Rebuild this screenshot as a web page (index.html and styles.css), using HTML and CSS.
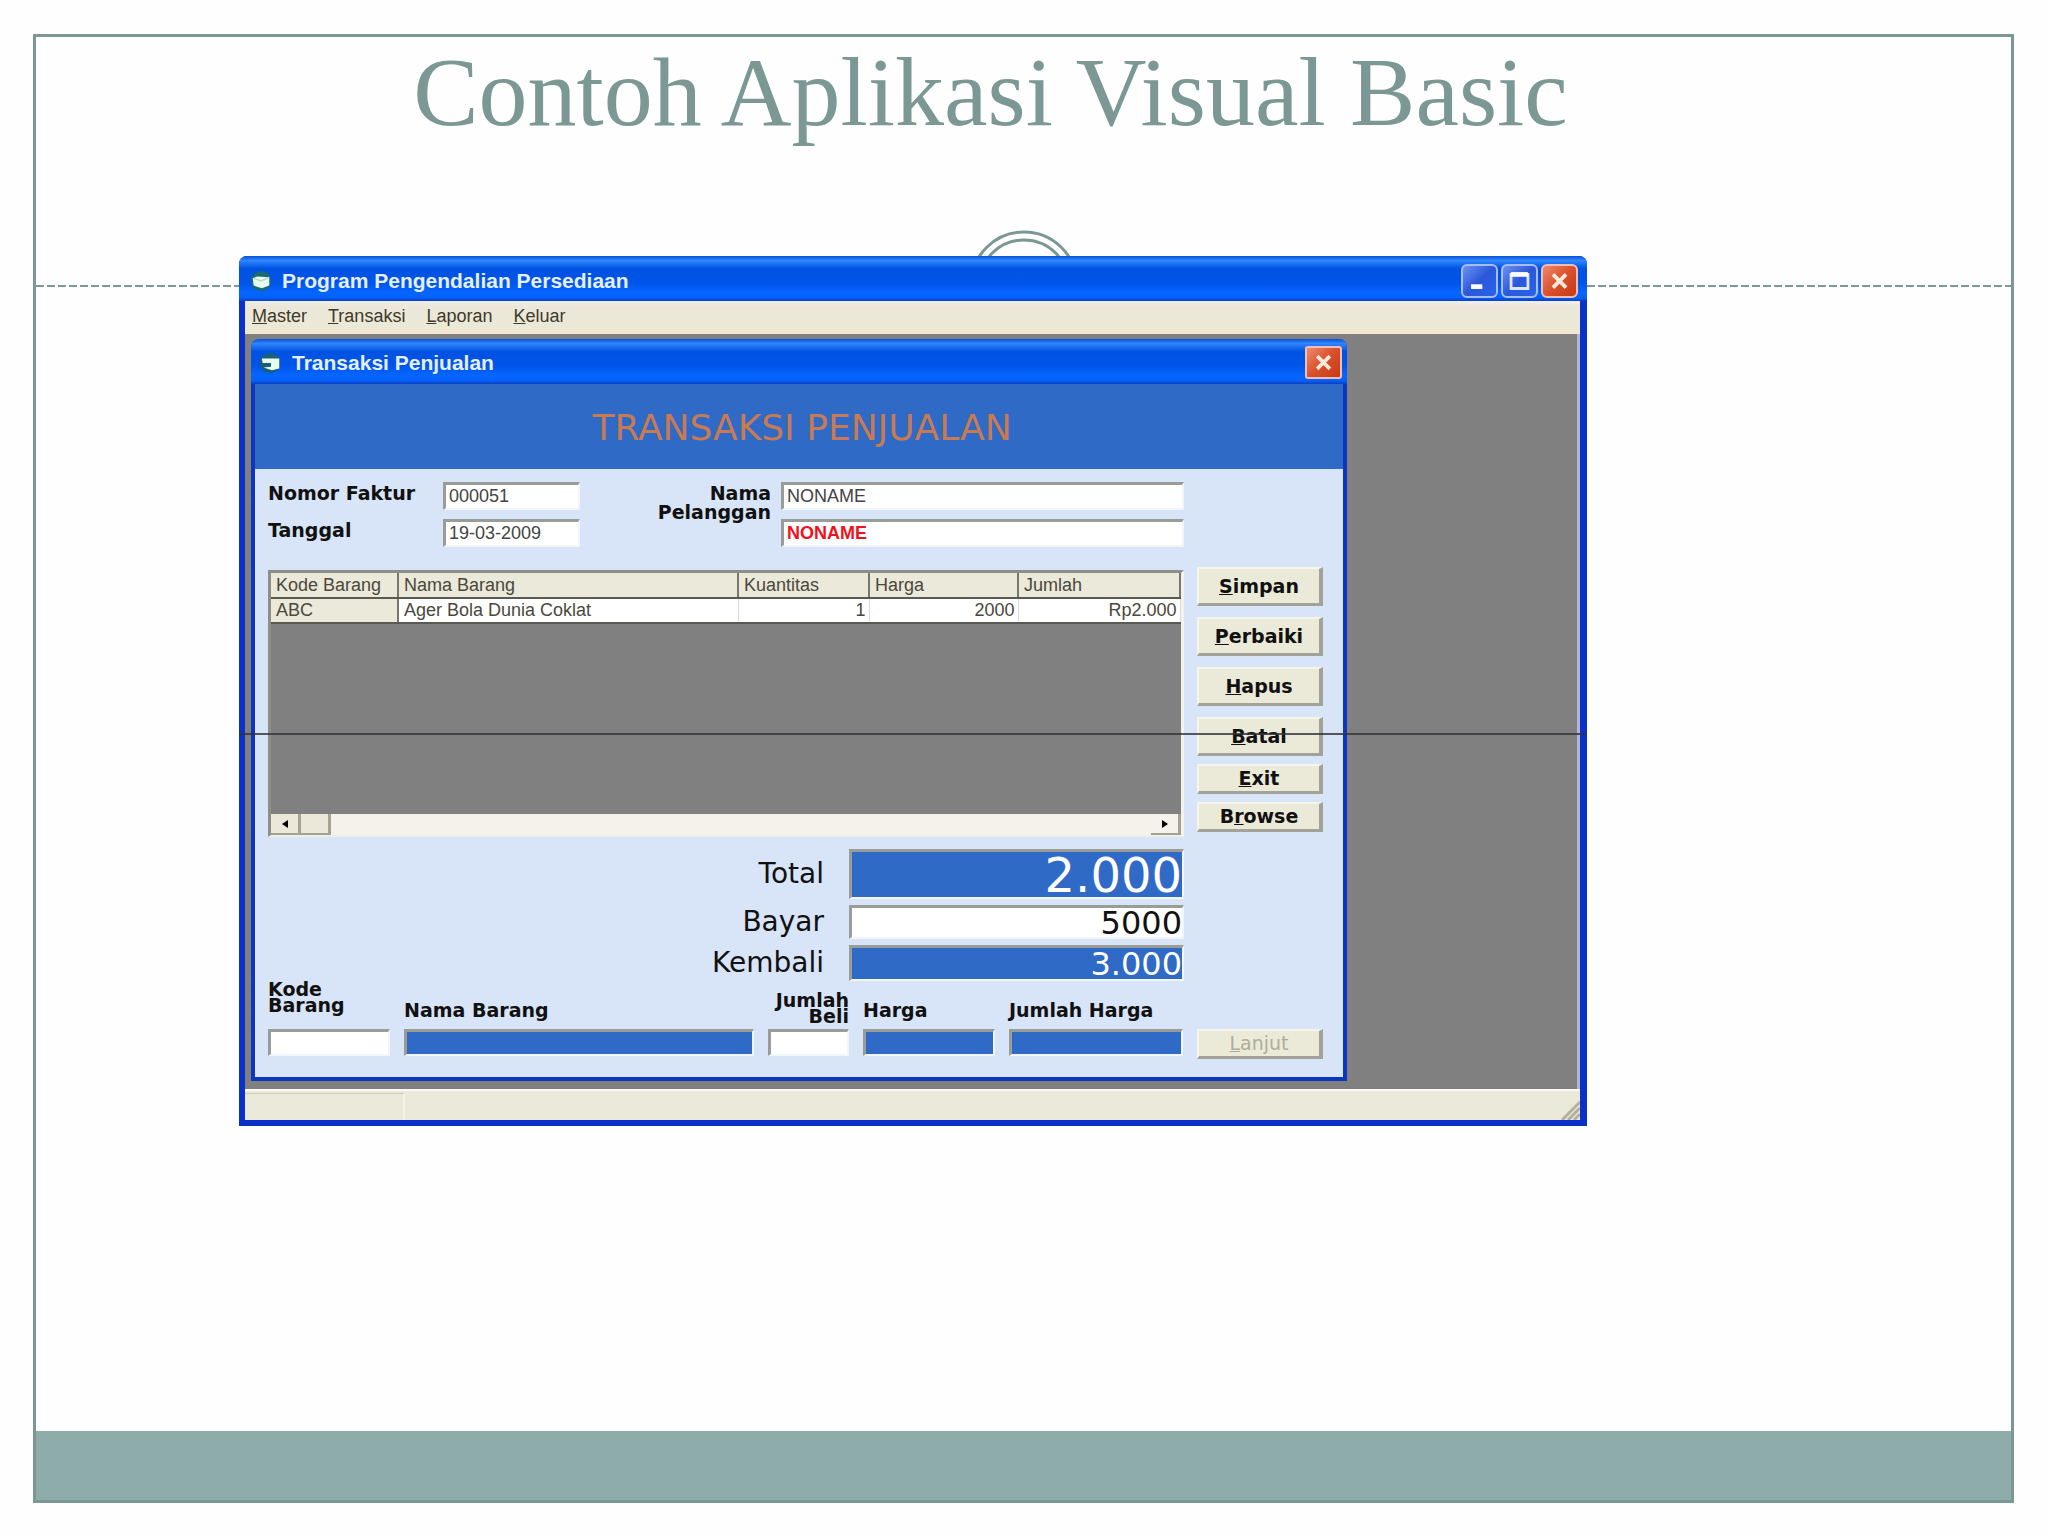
FILE: index.html
```html
<!DOCTYPE html>
<html lang="id">
<head>
<meta charset="utf-8">
<meta name="viewport" content="width=device-width, initial-scale=1">
<title>Contoh Aplikasi Visual Basic</title>
<link rel="stylesheet" href="styles.css">
</head>
<body>
<main class="slide">
  <header class="slide-header">
    <h1>Contoh Aplikasi Visual Basic</h1>
    <svg class="rings" viewBox="0 0 112 112" aria-hidden="true"><circle cx="56" cy="56" r="53"/><circle cx="56" cy="56" r="45"/></svg>
  </header>

  <section class="window" aria-label="Program Pengendalian Persediaan">
    <div class="titlebar">
      <svg class="app-icon" viewBox="0 0 24 24" aria-hidden="true"><circle cx="12" cy="12" r="11" fill="#1b6a74"/><path d="M3 9l5-2 13 1v9l-8 3-9-3z" fill="#e8fbf0"/><path d="M4 9l8 3 9-4" fill="none" stroke="#a9dcc8" stroke-width="1.5"/></svg>
      <span class="caption">Program Pengendalian Persediaan</span>
      <div class="controls">
        <button class="control" type="button" aria-label="Minimize"><svg viewBox="0 0 34 32"><path d="M8 22h12" stroke="#fff" stroke-width="5"/></svg></button>
        <button class="control" type="button" aria-label="Maximize"><svg viewBox="0 0 34 32"><path d="M8 9h18v15H8z" fill="none" stroke="#dbe6ff" stroke-width="3"/><path d="M8 9h18" stroke="#fff" stroke-width="5"/></svg></button>
        <button class="control close" type="button" aria-label="Close"><svg viewBox="0 0 34 32"><path d="M10 9l14 14M24 9L10 23" stroke="#ffe9d8" stroke-width="4"/></svg></button>
      </div>
    </div>
    <nav class="menubar">
      <a href="#"><u>M</u>aster</a><a href="#"><u>T</u>ransaksi</a><a href="#"><u>L</u>aporan</a><a href="#"><u>K</u>eluar</a>
    </nav>
    <div class="workspace">
      <section class="child" aria-label="Transaksi Penjualan">
        <div class="titlebar child-title">
          <svg class="app-icon" viewBox="0 0 24 24" aria-hidden="true"><circle cx="11" cy="12" r="11" fill="#1b5f74"/><path d="M2 7h19v11l-8 2-9-3 8-1v-4H3z" fill="#e8fbf0"/></svg>
          <span class="caption">Transaksi Penjualan</span>
          <button class="control close" type="button" aria-label="Close"><svg viewBox="0 0 34 32"><path d="M10 9l14 14M24 9L10 23" stroke="#ffe9d8" stroke-width="4"/></svg></button>
        </div>
        <h2 class="band">TRANSAKSI PENJUALAN</h2>
        <form class="form">
          <div class="customer">
            <label for="faktur">Nomor Faktur</label>
            <input id="faktur" type="text" value="000051">
            <label class="customer-label" for="pelanggan">Nama Pelanggan</label>
            <input id="pelanggan" type="text" value="NONAME">
            <label for="tanggal">Tanggal</label>
            <input id="tanggal" type="text" value="19-03-2009">
            <input class="alert" type="text" value="NONAME" aria-label="Nama Pelanggan terpilih">
          </div>
          <div class="sale">
            <div class="grid-view">
              <table>
                <colgroup><col class="c-code"><col class="c-name"><col class="c-qty"><col class="c-price"><col class="c-sum"></colgroup>
                <thead><tr><th>Kode Barang</th><th>Nama Barang</th><th>Kuantitas</th><th>Harga</th><th>Jumlah</th></tr></thead>
                <tbody><tr><th scope="row">ABC</th><td>Ager Bola Dunia Coklat</td><td class="num">1</td><td class="num">2000</td><td class="num">Rp2.000</td></tr></tbody>
              </table>
              <div class="scrollbar">
                <button type="button" aria-label="Gulir kiri"><svg viewBox="0 0 10 10"><path d="M8 1v8L2 5z"/></svg></button>
                <span class="thumb"></span>
                <button class="scroll-end" type="button" aria-label="Gulir kanan"><svg viewBox="0 0 10 10"><path d="M2 1v8l6-4z"/></svg></button>
              </div>
            </div>
            <div class="actions">
              <button type="button"><u>S</u>impan</button>
              <button type="button"><u>P</u>erbaiki</button>
              <button type="button"><u>H</u>apus</button>
              <button type="button"><u>B</u>atal</button>
              <button class="short" type="button"><u>E</u>xit</button>
              <button class="short" type="button">B<u>r</u>owse</button>
            </div>
          </div>
          <div class="totals">
            <label for="total">Total</label><input id="total" class="blue total" type="text" value="2.000" readonly>
            <label for="bayar">Bayar</label><input id="bayar" type="text" value="5000">
            <label for="kembali">Kembali</label><input id="kembali" class="blue" type="text" value="3.000" readonly>
          </div>
          <div class="entry">
            <label class="two-line top" for="kode">Kode Barang</label>
            <label for="nama">Nama Barang</label>
            <label class="two-line right" for="jumlah">Jumlah Beli</label>
            <label for="harga">Harga</label>
            <label for="subtotal">Jumlah Harga</label>
            <span></span>
            <input id="kode" type="text">
            <input id="nama" class="blue" type="text" readonly>
            <input id="jumlah" type="text">
            <input id="harga" class="blue" type="text" readonly>
            <input id="subtotal" class="blue" type="text" readonly>
            <button class="short" type="button" disabled><u>L</u>anjut</button>
          </div>
        </form>
      </section>
    </div>
    <div class="statusbar"><span class="panel"></span><svg class="grip" viewBox="0 0 20 20" aria-hidden="true"><path d="M2 20L20 2M8 20L20 8M14 20l6-6" stroke="#b3b09d" stroke-width="3"/></svg></div>
    <div class="seam"></div>
  </section>
  <footer class="slide-footer"></footer>
</main>
</body>
</html>
```
FILE: styles.css
```css
* { box-sizing: border-box; }

body {
  margin: 0;
  background: #fefefe;
  font-family: "Liberation Sans", Arial, sans-serif;
  font-size: 18px;
  color: #111;
}

button, input { font: inherit; color: inherit; margin: 0; }

.slide {
  display: flex;
  flex-direction: column;
  min-height: calc(100vh - 67px);
  margin: 34px 34px 33px 33px;
  border: 3px solid #7b9894;
}

.slide-header {
  position: relative;
  height: 250px;
  padding-right: 66px;
  background: repeating-linear-gradient(90deg, #7b9894 0 8px, transparent 8px 11px) bottom / 100% 2px no-repeat;
}

h1 {
  margin: 0;
  text-align: center;
  font: 400 98px/110px Georgia, "Liberation Serif", serif;
  color: #7b9894;
}

.rings {
  position: absolute;
  left: 50%;
  bottom: -54px;
  width: 112px;
  height: 112px;
  margin-left: -56px;
  fill: none;
  stroke: #7b9894;
  stroke-width: 3px;
}

.window {
  position: relative;
  width: 100%;
  max-width: 1348px;
  margin: -31px 0 40px 203px;
  border: solid #0a32c8;
  border-width: 0 7px 6px 6px;
  border-radius: 8px 8px 0 0;
  background: #0a32c8;
}

.titlebar {
  display: flex;
  align-items: center;
  gap: 10px;
  height: 45px;
  margin: 0 -7px 0 -6px;
  padding: 5px 9px 0 11px;
  border-radius: 8px 8px 0 0;
  background: linear-gradient(#0a50d8, #2f86ff 10%, #0052e0 28%, #0054ea 60%, #0566ff 80%, #0462fa 92%, #0a3fc4);
  color: #e4efff;
}

.app-icon { width: 22px; height: 22px; flex: none; }

.caption { flex: 1; font-size: 21px; font-weight: 700; }

.controls { display: flex; gap: 3px; }

.control {
  width: 37px;
  height: 34px;
  padding: 0;
  border: 2px solid #a9bdf5;
  border-radius: 6px;
  background: linear-gradient(135deg, #6d92f2, #2b58da 50%, #2a62ea);
}

.control svg { display: block; width: 100%; height: 100%; fill: none; }

.close { border-color: #eebfb8; background: linear-gradient(135deg, #ee8a6a, #d9502c 50%, #c73a12); }

.menubar {
  display: flex;
  gap: 21px;
  height: 33px;
  padding: 0 7px;
  line-height: 31px;
  background: linear-gradient(#eef0f0, #ece7da 15%, #ebe9d6 80%, #f6e6d0);
}

.menubar a { color: #3c3a2c; text-decoration: none; }

.workspace { padding: 5px 0 8px 6px; background: #808080; border-right: 3px solid #b4b4d8; }

.child {
  width: 100%;
  max-width: 1096px;
  border: solid #0c35c0;
  border-width: 0 4px 4px 4px;
  border-radius: 8px 8px 0 0;
  background: #d8e4f7;
}

.child-title { margin: 0 -4px; padding: 2px 5px 0 9px; }

.child-title .control { height: 33px; border-radius: 3px; }

.band {
  margin: 0;
  height: 85px;
  padding-left: 6px;
  font: 400 36px/88px "DejaVu Sans", Verdana, sans-serif;
  text-align: center;
  color: #c87a52;
  background: #2f6ac6;
}

.form { padding: 13px 20px 21px 13px; font-family: "DejaVu Sans", Verdana, sans-serif; }

label { font-weight: 700; font-size: 19px; line-height: 19px; }

input {
  width: 100%;
  min-width: 0;
  padding: 0 3px;
  border: solid #9a9c98;
  border-width: 3px 2px 2px 3px;
  border-right-color: #f2f5fa;
  border-bottom-color: #f2f5fa;
  border-radius: 0;
  background: #fff;
  outline: 0;
}

.blue { background: #2f6ac6; color: #fff; }

.customer {
  display: grid;
  grid-template-columns: 165px 137px 1fr 403px;
  grid-template-rows: 28px 28px;
  row-gap: 9px;
  column-gap: 10px;
  margin-right: 139px;
}

.customer input { font-family: "Liberation Sans", Arial, sans-serif; color: #444; }

.customer .customer-label { grid-row: 1 / 3; grid-column: 3; justify-self: end; width: 125px; text-align: right; }

.customer label { padding-top: 2px; }

#pelanggan, .customer .alert { grid-column: 4; }

.customer .alert { color: #f01020; font-weight: 700; }

.sale { display: flex; gap: 13px; margin-top: 20px; }

.grid-view {
  display: flex;
  flex-direction: column;
  flex: 1;
  margin-top: 3px;
  border: solid #8e8e86;
  border-width: 3px 3px 2px 3px;
  border-right-color: #f4f2ee;
  border-bottom-color: #f0eee2;
  background: #808080;
  font-family: "Liberation Sans", Arial, sans-serif;
}

table { width: 100%; table-layout: fixed; border-collapse: collapse; color: #4a483c; }

.c-code { width: 127px; }
.c-qty { width: 131px; }
.c-price { width: 149px; }
.c-sum { width: 162px; }

th, td { height: 25px; padding: 0 5px; line-height: 23px; text-align: left; font-weight: 400; white-space: nowrap; }

th { background: #ebe9da; border-right: 2px solid #77766c; border-bottom: 2px solid #5a5a52; }

td { background: #fff; border-right: 1px solid #dcdce0; border-bottom: 2px solid #5a5a52; }

.num { text-align: right; padding-right: 3px; }

.scrollbar { display: flex; height: 21px; margin-top: auto; background: #f5f2ec; }

.scrollbar button, .thumb {
  width: 30px;
  height: 21px;
  padding: 0;
  border: solid #a5a294;
  border-width: 0 3px 2px 0;
  border-radius: 0;
  background: #ebe8da;
}

.scrollbar svg { display: block; width: 10px; height: 10px; margin: auto; }

.scrollbar .scroll-end { margin-left: auto; background: #f5f2ec; }

.actions { display: flex; flex-direction: column; gap: 11px; width: 126px; padding-bottom: 5px; }

.actions button, .entry button {
  height: 39px;
  padding: 0;
  border: solid #f6f5ea;
  border-width: 2px 4px 3px 2px;
  border-right-color: #a3a298;
  border-bottom-color: #a3a298;
  border-radius: 0;
  background: #ebe9d8;
  font-size: 19px;
  font-weight: 700;
  line-height: 19px;
}

.actions .short, .entry .short { height: 30px; }

.actions .short { margin-top: -3px; }

.entry .short { font-weight: 400; }

.totals {
  display: grid;
  grid-template-columns: 1fr 335px;
  grid-template-rows: 50px 34px 36px;
  column-gap: 25px;
  row-gap: 6px;
  align-items: center;
  margin: 12px 139px 0 0;
}

.totals label { justify-self: end; font-size: 28px; font-weight: 400; line-height: 32px; }

.totals input { height: 100%; padding: 0; font-size: 32px; text-align: right; line-height: 30px; }

.totals .total { font-size: 48px; line-height: 44px; }

.entry {
  display: grid;
  grid-template-columns: 122px 1fr 81px 132px 174px 126px;
  grid-template-rows: 44px 27px;
  gap: 4px 14px;
}

.entry label { align-self: end; padding-bottom: 7px; line-height: 16px; white-space: nowrap; }

.entry .two-line { white-space: normal; padding-bottom: 1px; }

.entry .top { align-self: start; padding: 0; width: 90px; }

.entry .right { text-align: right; }

.entry button:disabled { color: #b0ad9c; }

.statusbar {
  display: flex;
  justify-content: space-between;
  align-items: end;
  height: 31px;
  border-top: 2px solid #fbfbf4;
  background: #ebe9d9;
}

.panel { width: 160px; height: 27px; border-top: 1px solid #cfccb8; border-right: 2px solid #f4f3e8; }

.grip { width: 20px; height: 20px; }

/* Join line between the two halves of the pasted capture */
.seam { position: absolute; left: -6px; right: -7px; top: 477px; height: 2px; background: #303238; opacity: .8; }

.slide-footer { height: 69px; margin-top: auto; background: #8dacaa; }
```
